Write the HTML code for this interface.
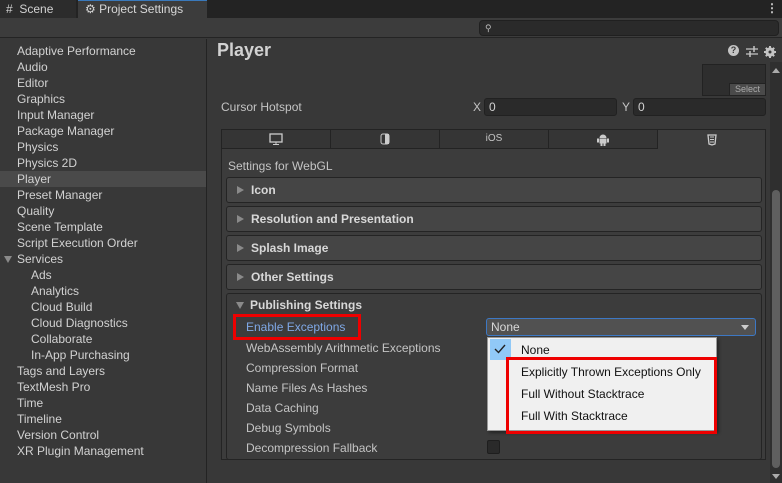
<!DOCTYPE html>
<html><head><style>
*{box-sizing:border-box;margin:0;padding:0}
body{width:782px;height:483px;background:#383838;font-family:"Liberation Sans",sans-serif;font-size:12px;color:#c4c4c4;position:relative;overflow:hidden}
.a{position:absolute}
.side div{height:16px;line-height:16px;padding-left:17px;color:#d2d2d2}
.fold{position:absolute;left:226px;width:536px;height:26px;background:#454545;border:1px solid #242424;border-radius:3px;font-weight:bold;color:#d8d8d8;line-height:24px;padding-left:24px}
.fold:before{content:"";position:absolute;left:10px;top:8px;border-left:7px solid #8a8a8a;border-top:4px solid transparent;border-bottom:4px solid transparent}
.lbl{position:absolute;left:246px;color:#c4c4c4;line-height:20px}
.tab{position:absolute;top:129px;height:20px;width:110px;background:#353535;border:1px solid #232323;text-align:center;line-height:18px;font-size:10px;color:#c4c4c4}
.fld{position:absolute;height:18px;background:#2a2a2a;border:1px solid #212121;border-radius:3px;padding-left:4px;line-height:16px;color:#d2d2d2}
.it{position:absolute;left:521px;color:#111;font-size:12px}
</style></head><body>
<div class="a" style="left:0;top:0;width:782px;height:18px;background:#232323"></div>
<div class="a" style="left:0;top:0;width:76px;height:18px;background:#2c2c2c;color:#d2d2d2;line-height:18px;padding-left:6px">#&nbsp; Scene</div>
<div class="a" style="left:78px;top:0;width:129px;height:18px;background:#3c3c3c;border-top:1px solid #3a79bb;color:#d8d8d8;line-height:17px;padding-left:7px">⚙ Project Settings</div>
<div class="a" style="left:766px;top:1px;color:#ccc;font-weight:bold;font-size:12px">⋮</div>
<div class="a" style="left:0;top:18px;width:782px;height:20px;background:#3c3c3c;border-bottom:1px solid #242424"></div>
<div class="a" style="left:479px;top:20px;width:300px;height:16px;background:#2a2a2a;border:1px solid #202020;border-radius:4px;font-size:9px;color:#bbb;padding-left:5px;line-height:14px">⚲</div>
<div class="a" style="left:206px;top:39px;width:1px;height:444px;background:#232323"></div>
<div class="a" style="left:0;top:171px;width:206px;height:16px;background:#4a4a4a"></div>
<div class="a side" style="left:0;top:43px;width:206px">
<div>Adaptive Performance</div><div>Audio</div><div>Editor</div><div>Graphics</div><div>Input Manager</div><div>Package Manager</div><div>Physics</div><div>Physics 2D</div><div>Player</div><div>Preset Manager</div><div>Quality</div><div>Scene Template</div><div>Script Execution Order</div><div style="position:relative">Services<span style="position:absolute;left:4px;top:5px;border-top:7px solid #8a8a8a;border-left:4px solid transparent;border-right:4px solid transparent"></span></div>
<div style="padding-left:31px">Ads</div><div style="padding-left:31px">Analytics</div><div style="padding-left:31px">Cloud Build</div><div style="padding-left:31px">Cloud Diagnostics</div><div style="padding-left:31px">Collaborate</div><div style="padding-left:31px">In-App Purchasing</div>
<div>Tags and Layers</div><div>TextMesh Pro</div><div>Time</div><div>Timeline</div><div>Version Control</div><div>XR Plugin Management</div>
</div>
<div class="a" style="left:217px;top:40px;font-size:18px;font-weight:bold;color:#d2d2d2">Player</div>
<div class="a" style="left:728px;top:45px;width:11px;height:11px;border-radius:50%;background:#c4c4c4;color:#383838;font-size:9px;font-weight:bold;text-align:center;line-height:11px">?</div>
<svg class="a" style="left:746px;top:46px" width="12" height="11" viewBox="0 0 12 11"><path d="M0 3h12M0 8h12" stroke="#c4c4c4" stroke-width="1.3"/><path d="M8 0v6M4 5v6" stroke="#c4c4c4" stroke-width="1.5"/></svg>
<svg class="a" style="left:764px;top:46px" width="12" height="12" viewBox="0 0 12 12"><circle cx="6" cy="6" r="3.5" fill="none" stroke="#c4c4c4" stroke-width="2.2"/><path d="M6 0v12M0 6h12M1.8 1.8l8.4 8.4M10.2 1.8l-8.4 8.4" stroke="#c4c4c4" stroke-width="2"/><circle cx="6" cy="6" r="1.5" fill="#383838"/></svg>
<div class="a" style="left:770px;top:62px;width:12px;height:421px;background:#2f2f2f"></div>
<div class="a" style="left:772px;top:190px;width:8px;height:278px;background:#5f5f5f;border-radius:4px"></div>
<div class="a" style="left:772px;top:68px;border-bottom:5px solid #aaa;border-left:4px solid transparent;border-right:4px solid transparent"></div>
<div class="a" style="left:772px;top:474px;border-top:5px solid #aaa;border-left:4px solid transparent;border-right:4px solid transparent"></div>
<div class="a" style="left:702px;top:64px;width:64px;height:32px;background:#2e2e2e;border:1px solid #222"></div>
<div class="a" style="left:729px;top:83px;width:37px;height:13px;background:#4a4a4a;border:1px solid #222;font-size:9px;color:#aaa;text-align:center;line-height:11px">Select</div>
<div class="a" style="left:221px;top:100px;color:#c4c4c4">Cursor Hotspot</div>
<div class="a" style="left:473px;top:100px">X</div><div class="fld" style="left:484px;top:98px;width:133px">0</div>
<div class="a" style="left:622px;top:100px">Y</div><div class="fld" style="left:633px;top:98px;width:133px">0</div>
<div class="a" style="left:221px;top:149px;width:545px;height:311px;background:#3c3c3c;border:1px solid #242424;border-top:none"></div>
<div class="tab" style="left:221px"><svg width="14" height="12" viewBox="0 0 14 12" style="margin-top:3px"><rect x="1" y="1" width="12" height="8" fill="none" stroke="#ccc" stroke-width="1.3"/><path d="M7 9v2M4 11.5h6" stroke="#ccc"/></svg></div>
<div class="tab" style="left:330px"><svg width="10" height="12" viewBox="0 0 10 12" style="margin-top:3px"><rect x="1" y="1" width="8" height="10" rx="2" fill="none" stroke="#ccc"/><rect x="5" y="1" width="4" height="10" fill="#ccc"/></svg></div>
<div class="tab" style="left:439px">iOS</div>
<div class="tab" style="left:548px"><svg width="12" height="14" viewBox="0 0 12 14" style="margin-top:3px"><path d="M2.5 5a3.5 3.5 0 0 1 7 0z" fill="#ccc"/><rect x="2.5" y="5.5" width="7" height="5" fill="#ccc"/><rect x="0" y="5.5" width="2" height="4" fill="#ccc"/><rect x="10" y="5.5" width="2" height="4" fill="#ccc"/><rect x="3.5" y="10" width="2" height="3" fill="#ccc"/><rect x="6.5" y="10" width="2" height="3" fill="#ccc"/></svg></div>
<div class="tab" style="left:657px;width:109px;background:#3c3c3c;border-bottom:none"><svg width="10" height="13" viewBox="0 0 10 13" style="margin-top:3px"><path d="M1 2h8l-1 9-3 1-3-1z" fill="none" stroke="#ccc" stroke-width="1.3"/><path d="M3 4h4M3 6.5h4M3 9h4" stroke="#ccc"/></svg></div>
<div class="a" style="left:228px;top:159px">Settings for WebGL</div>
<div class="fold" style="top:177px">Icon</div>
<div class="fold" style="top:206px">Resolution and Presentation</div>
<div class="fold" style="top:235px">Splash Image</div>
<div class="fold" style="top:264px">Other Settings</div>
<div class="a" style="left:226px;top:293px;width:536px;height:167px;background:#3c3c3c;border:1px solid #242424;border-radius:3px"></div>
<div class="a" style="left:250px;top:298px;font-weight:bold;color:#d8d8d8">Publishing Settings</div>
<div class="a" style="left:236px;top:302px;border-top:7px solid #8a8a8a;border-left:4px solid transparent;border-right:4px solid transparent"></div>
<div class="lbl" style="top:317px;color:#7fa8e6">Enable Exceptions</div>
<div class="lbl" style="top:338px">WebAssembly Arithmetic Exceptions</div>
<div class="lbl" style="top:358px">Compression Format</div>
<div class="lbl" style="top:378px">Name Files As Hashes</div>
<div class="lbl" style="top:398px">Data Caching</div>
<div class="lbl" style="top:418px">Debug Symbols</div>
<div class="lbl" style="top:438px">Decompression Fallback</div>
<div class="a" style="left:487px;top:440px;width:13px;height:14px;background:#2a2a2a;border:1px solid #1e1e1e;border-radius:2px"></div>
<div class="a" style="left:487px;top:420px;width:13px;height:10px;background:#2a2a2a"></div>
<div class="a" style="left:233px;top:314px;width:128px;height:26px;border:3px solid #e00"></div>
<div class="a" style="left:486px;top:318px;width:270px;height:18px;background:#515151;border:1px solid #3d78c4;border-radius:3px;padding-left:4px;line-height:16px;color:#d8d8d8">None</div>
<div class="a" style="left:741px;top:325px;border-top:5px solid #ccc;border-left:4px solid transparent;border-right:4px solid transparent"></div>
<div class="a" style="left:487px;top:337px;width:230px;height:94px;background:#f0f0f0;border:1px solid #999;box-shadow:2px 2px 3px rgba(0,0,0,.4)"></div>
<div class="a" style="left:490px;top:339px;width:21px;height:21px;background:#91c9f7"></div>
<svg class="a" style="left:494px;top:344px" width="12" height="10" viewBox="0 0 12 10"><path d="M1 5l3.5 3.5L11 1" fill="none" stroke="#222" stroke-width="1.4"/></svg>
<div class="it" style="top:343px">None</div>
<div class="it" style="top:365px">Explicitly Thrown Exceptions Only</div>
<div class="it" style="top:387px">Full Without Stacktrace</div>
<div class="it" style="top:409px">Full With Stacktrace</div>
<div class="a" style="left:506px;top:357px;width:211px;height:77px;border:3px solid #e00"></div>
</body></html>
